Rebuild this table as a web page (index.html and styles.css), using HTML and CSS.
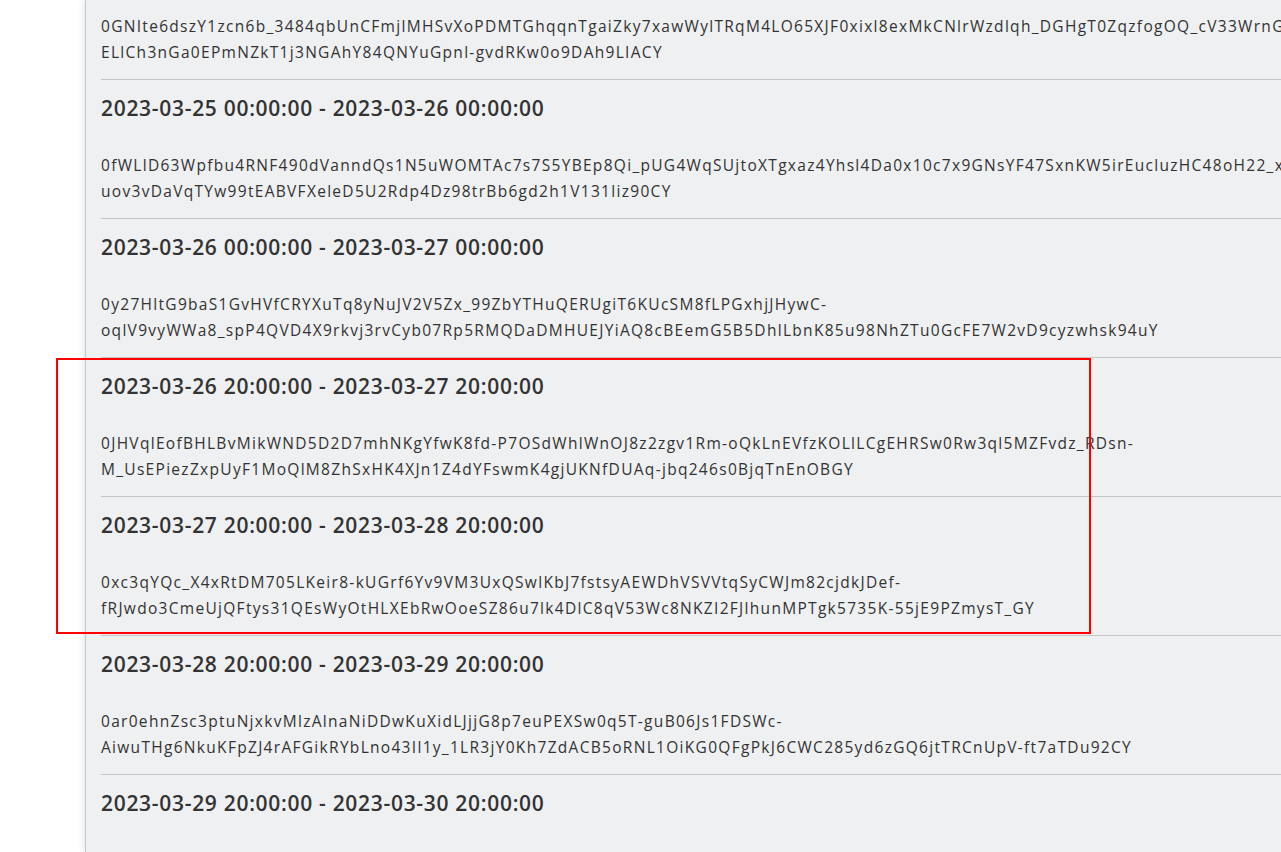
FILE: index.html
```html
<!DOCTYPE html>
<html lang="en">
<head>
<meta charset="utf-8">
<title>Keys</title>
<link rel="stylesheet" href="styles.css">
</head>
<body>
<div class="layout">
  <aside class="sidebar"></aside>
  <main class="main">
    <div class="list">
      <section class="item item-first">
        <p class="key"><span class="ln">0GNIte6dszY1zcn6b_3484qbUnCFmjlMHSvXoPDMTGhqqnTgaiZky7xawWylTRqM4LO65XJF0xixl8exMkCNlrWzdlqh_DGHgT0ZqzfogOQ_cV33WrnGx-</span><span class="ln">ELlCh3nGa0EPmNZkT1j3NGAhY84QNYuGpnl-gvdRKw0o9DAh9LIACY</span></p>
      </section>
      <section class="item">
        <h3 class="range">2023-03-25 00:00:00 - 2023-03-26 00:00:00</h3>
        <p class="key"><span class="ln">0fWLlD63Wpfbu4RNF490dVanndQs1N5uWOMTAc7s7S5YBEp8Qi_pUG4WqSUjtoXTgxaz4Yhsl4Da0x10c7x9GNsYF47SxnKW5irEucluzHC48oH22_x-</span><span class="ln">uov3vDaVqTYw99tEABVFXeleD5U2Rdp4Dz98trBb6gd2h1V131liz90CY</span></p>
      </section>
      <section class="item">
        <h3 class="range">2023-03-26 00:00:00 - 2023-03-27 00:00:00</h3>
        <p class="key"><span class="ln">0y27HltG9baS1GvHVfCRYXuTq8yNuJV2V5Zx_99ZbYTHuQERUgiT6KUcSM8fLPGxhjJHywC-</span><span class="ln">oqlV9vyWWa8_spP4QVD4X9rkvj3rvCyb07Rp5RMQDaDMHUEJYiAQ8cBEemG5B5DhlLbnK85u98NhZTu0GcFE7W2vD9cyzwhsk94uY</span></p>
      </section>
      <div class="marked">
        <section class="item">
          <h3 class="range">2023-03-26 20:00:00 - 2023-03-27 20:00:00</h3>
          <p class="key"><span class="ln">0JHVqlEofBHLBvMikWND5D2D7mhNKgYfwK8fd-P7OSdWhlWnOJ8z2zgv1Rm-oQkLnEVfzKOLlLCgEHRSw0Rw3ql5MZFvdz_RDsn-</span><span class="ln">M_UsEPiezZxpUyF1MoQlM8ZhSxHK4XJn1Z4dYFswmK4gjUKNfDUAq-jbq246s0BjqTnEnOBGY</span></p>
        </section>
        <section class="item">
          <h3 class="range">2023-03-27 20:00:00 - 2023-03-28 20:00:00</h3>
          <p class="key"><span class="ln">0xc3qYQc_X4xRtDM705LKeir8-kUGrf6Yv9VM3UxQSwlKbJ7fstsyAEWDhVSVVtqSyCWJm82cjdkJDef-</span><span class="ln">fRJwdo3CmeUjQFtys31QEsWyOtHLXEbRwOoeSZ86u7lk4DlC8qV53Wc8NKZI2FJlhunMPTgk5735K-55jE9PZmysT_GY</span></p>
        </section>
        <div class="highlight"></div>
      </div>
      <section class="item">
        <h3 class="range">2023-03-28 20:00:00 - 2023-03-29 20:00:00</h3>
        <p class="key"><span class="ln">0ar0ehnZsc3ptuNjxkvMlzAlnaNiDDwKuXidLJjjG8p7euPEXSw0q5T-guB06Js1FDSWc-</span><span class="ln">AiwuTHg6NkuKFpZJ4rAFGikRYbLno43Il1y_1LR3jY0Kh7ZdACB5oRNL1OiKG0QFgPkJ6CWC285yd6zGQ6jtTRCnUpV-ft7aTDu92CY</span></p>
      </section>
      <section class="item">
        <h3 class="range">2023-03-29 20:00:00 - 2023-03-30 20:00:00</h3>
      </section>
    </div>
  </main>
</div>
</body>
</html>
```
FILE: styles.css
```css
html, body {
  margin: 0;
  padding: 0;
  height: 100%;
  overflow: hidden;
}
body {
  font-family: "Open Sans", "Liberation Sans", Arial, sans-serif;
  color: #333;
  background: #fff;
}
.layout {
  display: flex;
  height: 100%;
}
.sidebar {
  width: 85px;
  flex: none;
  background: #fff;
}
.main {
  flex: 1;
  min-width: 0;
  background: #eff0f2;
  border-left: 1px solid #c6c6c6;
  box-shadow: -3px 0 5px rgba(0, 0, 0, 0.07);
  padding-left: 15px;
  padding-top: 13px;
}
.list {
  display: flex;
  flex-direction: column;
}
.item {
  border-top: 1px solid #c4c4c4;
}
.item-first {
  border-top: none;
}
.range {
  margin: 16px 0 0;
  font-size: 21px;
  line-height: 24px;
  font-weight: 600;
  letter-spacing: 0.7px;
  color: #333;
}
.key {
  margin: 32px 0 14px;
  font-size: 15.5px;
  line-height: 26px;
  letter-spacing: 1.3px;
  color: #333;
}
.item-first .key {
  margin-top: 0;
}
.ln {
  display: block;
  white-space: nowrap;
}
.marked {
  position: relative;
}
.highlight {
  position: absolute;
  left: -45px;
  top: 1px;
  width: 1031px;
  height: 272px;
  border: 2px solid #ff0000;
  pointer-events: none;
}
```
